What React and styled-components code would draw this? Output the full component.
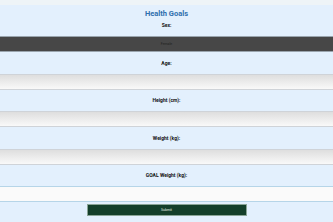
import styled, { createGlobalStyle } from 'styled-components';

const GlobalStyle = createGlobalStyle`
  html, body {
    margin: 0;
    padding: 0;
    background: #eef4f7;
    font-family: Roboto, "Liberation Sans", Arial, sans-serif;
  }
`;

const fields = [
  { label: 'Age:' },
  { label: 'Height (cm):' },
  { label: 'Weight (kg):' },
  { label: 'GOAL Weight (kg):', last: true },
];

const App = () => {
  return (
    <>
      <GlobalStyle />
      <Page>
        <Title>Health Goals</Title>
        <Form onSubmit={(e) => e.preventDefault()}>
          <Label>Sex:</Label>
          <Select defaultValue="female">
            <option value="female">Female</option>
            <option value="male">Male</option>
          </Select>
          {fields.map((f) => (
            <Group key={f.label}>
              <Label>{f.label}</Label>
              <Input type="number" $last={f.last} />
            </Group>
          ))}
          <Submit type="submit">Submit</Submit>
        </Form>
      </Page>
    </>
  );
};

export default App;

const Page = styled.div`
  margin-top: 5px;
  background: #e3f0fd;
  min-height: 217px;
  display: flex;
  flex-direction: column;
  align-items: stretch;
`;

const Title = styled.h2`
  margin: 0;
  padding-top: 3px;
  height: 11px;
  line-height: 11px;
  font-size: 7.5px;
  font-weight: 700;
  text-align: center;
  color: #2f6fad;
`;

const Form = styled.form`
  display: flex;
  flex-direction: column;
  padding-top: 3px;
`;

const Group = styled.div`
  display: flex;
  flex-direction: column;
  padding-top: 7.6px;
`;

const Label = styled.label`
  display: block;
  height: 7px;
  line-height: 7px;
  font-size: 5px;
  font-weight: 700;
  text-align: center;
  color: #111;
  margin-bottom: 7px;
`;

const Select = styled.select`
  appearance: none;
  box-sizing: border-box;
  width: 100%;
  height: 16px;
  margin: 0;
  padding: 0;
  border: none;
  border-top: 1px solid #9aa5ae;
  border-bottom: 1px solid #9aa5ae;
  background: #474747;
  color: #222;
  font-family: inherit;
  font-size: 3.5px;
  text-align: center;
  text-align-last: center;
  outline: none;
`;

const Input = styled.input`
  box-sizing: border-box;
  width: 100%;
  height: 16px;
  margin: 0;
  padding: 0 4px;
  border: none;
  border-top: 1px solid ${(p) => (p.$last ? '#b6d5e8' : '#cfd3d8')};
  border-bottom: 1px solid ${(p) => (p.$last ? '#b6d5e8' : '#cfd3d8')};
  background: ${(p) => (p.$last ? '#fafafa' : 'linear-gradient(#dedede, #f9f9f9)')};
  font-size: 5px;
  outline: none;
`;

const Submit = styled.button`
  align-self: center;
  width: 160px;
  height: 12px;
  margin: 2px 0 0 0;
  padding: 0;
  border: 1px solid #8aa596;
  background: #143f2a;
  color: #e8efe9;
  font-family: inherit;
  font-size: 3.5px;
  cursor: pointer;
`;
